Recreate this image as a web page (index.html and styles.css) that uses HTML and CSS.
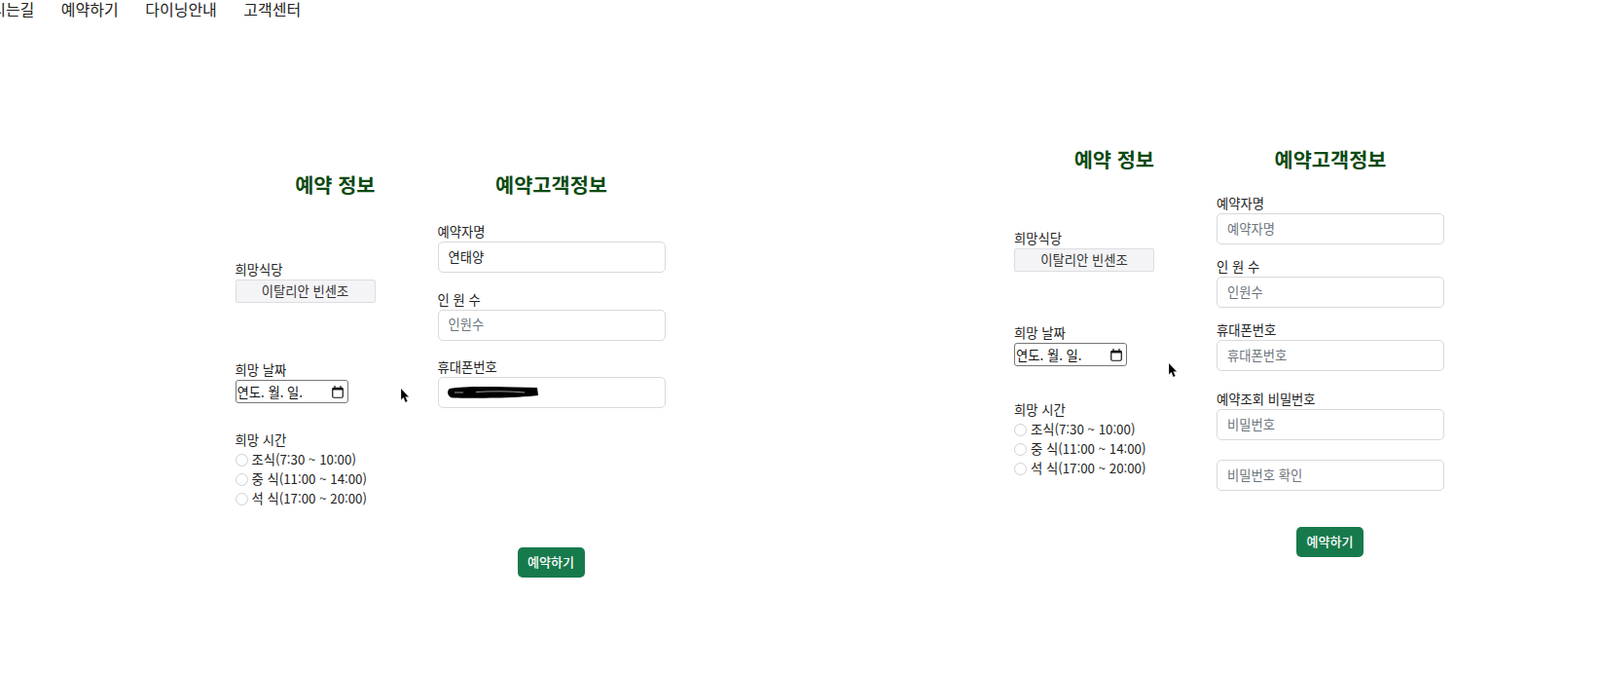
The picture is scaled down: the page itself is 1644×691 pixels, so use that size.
FILE: index.html
```html
<!DOCTYPE html>
<html lang="ko">
<head>
<meta charset="utf-8">
<title>예약하기</title>
<link rel="stylesheet" href="styles.css">
</head>
<body>
<nav class="nav">
  <a class="nav-link nav-clipped">찾아오시는길</a>
  <a class="nav-link">예약하기</a>
  <a class="nav-link">다이닝안내</a>
  <a class="nav-link">고객센터</a>
</nav>
<main class="stage">
  <form class="panel panel-a">
    <div class="columns">
      <section class="col-left">
        <h2 class="title title-right">예약 정보</h2>
        <div class="field f-shop">
          <label class="label">희망식당</label>
          <div class="shop">이탈리안 빈센조</div>
        </div>
        <div class="field f-date">
          <label class="label">희망 날짜</label>
          <div class="date"><span>연도. 월. 일.</span>
            <svg class="cal" viewBox="0 0 12 13"><rect x=".75" y="2.25" width="10.5" height="10" rx="1.2" fill="none" stroke="#111" stroke-width="1.2"/><rect x=".75" y="2.25" width="10.5" height="2.2" fill="#111"/><path d="M3 0v3M9 0v3" stroke="#111" stroke-width="1.2"/></svg>
          </div>
        </div>
        <div class="field f-time">
          <label class="label">희망 시간</label>
          <div class="radio"><i class="dot"></i>조식(7:30 ~ 10:00)</div>
          <div class="radio"><i class="dot"></i>중 식(11:00 ~ 14:00)</div>
          <div class="radio"><i class="dot"></i>석 식(17:00 ~ 20:00)</div>
        </div>
      </section>
      <section class="col-right">
        <h2 class="title">예약고객정보</h2>
        <div class="field r-first">
          <label class="label">예약자명</label>
          <input class="input" value="연태양">
        </div>
        <div class="field r-next">
          <label class="label">인 원 수</label>
          <input class="input" placeholder="인원수">
        </div>
        <div class="field r-next">
          <label class="label">휴대폰번호</label>
          <div class="input-wrap">
            <input class="input">
            <svg class="scribble" viewBox="0 0 94 13"><path d="M3 3C20 0 50 1 93 2L94 10C70 13 25 13 6 12.5C0 11 0 5 3 3Z" fill="#000"/><path d="M8 7h9M30 6.5c15-1 35-1 50 .5" stroke="#ddd" stroke-width=".7" fill="none"/></svg>
          </div>
        </div>
      </section>
    </div>
    <div class="actions actions-a"><button type="button" class="btn">예약하기</button></div>
  </form>

  <form class="panel panel-b">
    <div class="columns">
      <section class="col-left">
        <h2 class="title title-right">예약 정보</h2>
        <div class="field f-shop">
          <label class="label">희망식당</label>
          <div class="shop">이탈리안 빈센조</div>
        </div>
        <div class="field f-date">
          <label class="label">희망 날짜</label>
          <div class="date"><span>연도. 월. 일.</span>
            <svg class="cal" viewBox="0 0 12 13"><rect x=".75" y="2.25" width="10.5" height="10" rx="1.2" fill="none" stroke="#111" stroke-width="1.2"/><rect x=".75" y="2.25" width="10.5" height="2.2" fill="#111"/><path d="M3 0v3M9 0v3" stroke="#111" stroke-width="1.2"/></svg>
          </div>
        </div>
        <div class="field f-time">
          <label class="label">희망 시간</label>
          <div class="radio"><i class="dot"></i>조식(7:30 ~ 10:00)</div>
          <div class="radio"><i class="dot"></i>중 식(11:00 ~ 14:00)</div>
          <div class="radio"><i class="dot"></i>석 식(17:00 ~ 20:00)</div>
        </div>
      </section>
      <section class="col-right">
        <h2 class="title">예약고객정보</h2>
        <div class="field r-first">
          <label class="label">예약자명</label>
          <input class="input" placeholder="예약자명">
        </div>
        <div class="field r-next">
          <label class="label">인 원 수</label>
          <input class="input" placeholder="인원수">
        </div>
        <div class="field r-next">
          <label class="label">휴대폰번호</label>
          <input class="input" placeholder="휴대폰번호">
        </div>
        <div class="field r-pass">
          <label class="label">예약조회 비밀번호</label>
          <input class="input" placeholder="비밀번호">
        </div>
        <div class="field r-confirm">
          <input class="input" placeholder="비밀번호 확인">
        </div>
      </section>
    </div>
    <div class="actions actions-b"><button type="button" class="btn">예약하기</button></div>
  </form>
</main>
<svg class="cursor cursor-a" viewBox="0 0 10 15"><path d="M0 0v11.5l2.6-2.4 2 4.9 2-.9-2-4.7H8Z" fill="#000" stroke="#999" stroke-width=".4"/></svg>
<svg class="cursor cursor-b" viewBox="0 0 10 15"><path d="M0 0v11.5l2.6-2.4 2 4.9 2-.9-2-4.7H8Z" fill="#000" stroke="#999" stroke-width=".4"/></svg>
</body>
</html>
```
FILE: styles.css
```css
* { box-sizing: border-box; }
html, body { margin: 0; height: 691px; overflow: hidden; background: #fff; }
body {
  position: relative;
  font-family: "Noto Sans CJK KR", "Noto Sans", sans-serif;
  color: #212529;
  font-size: 13.3px;
}
.nav {
  display: flex;
  gap: 27.5px;
  height: 18px;
  margin-left: -53px;
  align-items: center;
  font-size: 16px;
  line-height: 18px;
  color: #222;
}
.nav-link { display: block; white-space: nowrap; }
.stage { position: relative; display: flex; }
.panel { flex: none; }
.panel-a { width: 800.5px; margin-left: 241.5px; padding-top: 159px; }
.panel-b { width: 442px; padding-top: 133px; }
.columns { display: flex; gap: 64px; }
.col-left { width: 144px; flex: none; }
.col-right { width: 234px; flex: none; }
.title {
  margin: 0;
  height: 26px;
  font-size: 20.8px;
  line-height: 24px;
  font-weight: 700;
  color: #0b4a12;
  text-align: center;
  white-space: nowrap;
}
.title-right { text-align: right; }
.label { display: block; height: 20px; line-height: 20px; color: #222; white-space: nowrap; }
.shop {
  height: 24px;
  line-height: 22px;
  text-align: center;
  background: #f4f4f6;
  border: 1px solid #dcdde2;
  border-radius: 2px;
  color: #333;
}
.date {
  display: flex;
  align-items: center;
  justify-content: space-between;
  width: 116px;
  height: 24px;
  padding: 0 4px 0 1px;
  border: 1px solid #767676;
  border-radius: 3px;
  color: #111;
}
.cal { width: 12px; height: 13px; flex: none; }
.radio { display: flex; align-items: center; height: 20px; padding-bottom: 2px; color: #222; white-space: nowrap; }
.dot { width: 13px; height: 13px; margin: 2px 4px 0 0; border: 1px solid #cfd0d4; border-radius: 50%; flex: none; }
.input {
  display: block;
  width: 100%;
  height: 32px;
  padding: 0 10px 2px;
  font: inherit;
  color: #212529;
  border: 1px solid #d7d9de;
  border-radius: 5px;
  background: #fff;
}
.input::placeholder { color: #6c757d; opacity: 1; }
.input-wrap { position: relative; }
.scribble { position: absolute; left: 9px; top: 9px; width: 94px; height: 13px; }
.btn {
  display: block;
  width: 69px;
  height: 31px;
  padding: 0 0 2px;
  font: inherit;
  font-size: 13px;
  font-weight: 500;
  color: #fff;
  background: #177a4c;
  border: 0;
  border-radius: 5px;
}
.actions { padding-left: 290px; }
.actions-a { margin-top: 40px; }
.actions-b { margin-top: 37px; }
.cursor { position: absolute; width: 10px; height: 15px; }
.cursor-a { left: 412px; top: 399px; }
.cursor-b { left: 1201px; top: 373px; }

/* panel A vertical rhythm */
.panel-a .f-shop { margin-top: 64px; }
.panel-a .f-date { margin-top: 59px; }
.panel-a .f-time { margin-top: 28px; }
.panel-a .r-first { margin-top: 25px; }
.panel-a .r-next { margin-top: 17.5px; }

/* panel B vertical rhythm */
.panel-b .f-shop { margin-top: 58px; }
.panel-b .f-date { margin-top: 53px; }
.panel-b .f-time { margin-top: 35px; }
.panel-b .r-first { margin-top: 22px; }
.panel-b .r-next { margin-top: 13px; }
.panel-b .r-pass { margin-top: 19px; }
.panel-b .r-confirm { margin-top: 20px; }
```
